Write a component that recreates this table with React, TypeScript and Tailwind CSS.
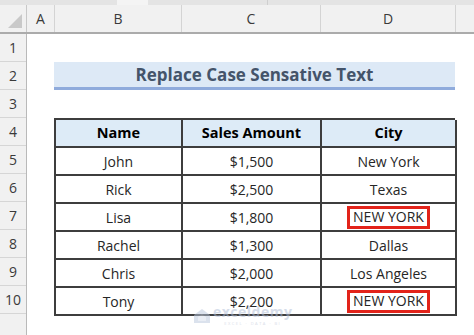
import React from "react";

const rows = [
  { name: "John", amount: "$1,500", city: "New York", boxed: false },
  { name: "Rick", amount: "$2,500", city: "Texas", boxed: false },
  { name: "Lisa", amount: "$1,800", city: "NEW YORK", boxed: true },
  { name: "Rachel", amount: "$1,300", city: "Dallas", boxed: false },
  { name: "Chris", amount: "$2,000", city: "Los Angeles", boxed: false },
  { name: "Tony", amount: "$2,200", city: "NEW YORK", boxed: true },
];

function Watermark() {
  return (
    <div className="absolute left-[193px] top-[306px] flex items-center gap-[2px] opacity-50 pointer-events-none">
      <svg width="18" height="16" viewBox="0 0 18 16">
        <path d="M1 7 L9 1 L17 7 L17 15 L1 15 Z" fill="#b9c6dc" />
        <path d="M5 9 L9 6 L13 9 L13 13 L5 13 Z" fill="#d6deec" />
      </svg>
      <div className="flex flex-col items-center">
        <span className="text-[14px] leading-[12px] font-bold text-[#aebcd6] font-['Open_Sans',sans-serif] tracking-[0.5px]">exceldemy</span>
        <span className="text-[4px] leading-[5px] text-[#b5c0d3] tracking-[1.5px] font-['Open_Sans',sans-serif] mt-[3px]">EXCEL · DATA · BI</span>
      </div>
    </div>
  );
}

export default function App() {
  const rowNums = ["1", "2", "3", "4", "5", "6", "7", "8", "9", "10", ""];
  return (
    <div className="relative w-[474px] h-[335px] overflow-hidden bg-white font-['Open_Sans',sans-serif] text-[#262626]">
      {/* top strip */}
      <div className="flex h-[5px] bg-[#e4e4e4]">
        <div className="w-[117px]" />
        <div className="w-[31px] bg-[#f4f4f4]" />
        <div className="w-[120px] border-r border-[#cfcfcf]" />
        <div className="flex-1" />
      </div>
      {/* column header */}
      <div className="flex h-[29px] bg-[#f1f1f1] border-b-2 border-[#ababab] text-[14px] text-[#3a3a3a]">
        <div className="relative w-[27px] border-r border-[#c8c8c8]">
          <div className="absolute right-[4px] bottom-[4px] w-0 h-0 border-l-[14px] border-l-transparent border-b-[14px] border-b-[#c9c9c9]" />
        </div>
        <div className="w-[28px] border-r border-[#d4d4d4] flex items-center justify-center">A</div>
        <div className="w-[127px] border-r border-[#d4d4d4] flex items-center justify-center">B</div>
        <div className="w-[139px] border-r border-[#d4d4d4] flex items-center justify-center">C</div>
        <div className="w-[135px] border-r border-[#d4d4d4] flex items-center justify-center">D</div>
        <div className="flex-1" />
      </div>
      <div className="flex">
        {/* row headers */}
        <div className="w-[27px] flex flex-col bg-[#f1f1f1] border-r border-[#b9b9b9] text-[14px] text-[#3a3a3a]">
          {rowNums.map((n, i) => (
            <div key={i} className="h-[28px] shrink-0 border-b border-[#d6d6d6] flex items-center justify-center">
              {n}
            </div>
          ))}
        </div>
        {/* sheet area */}
        <div className="flex flex-col pl-[27px]">
          <div className="h-[28px]" />
          <div className="w-[401px] h-[28px] bg-[#dde9f6] border-b-[3px] border-[#8fabdc] flex items-center justify-center text-[17px] font-bold text-[#44546a]">
            Replace Case Sensative Text
          </div>
          <div className="h-[28px]" />
          <div className="grid grid-cols-[127px_139px_135px] w-[401px] border-t-2 border-l-2 border-[#3d3d3d]">
            {["Name", "Sales Amount", "City"].map((h) => (
              <div key={h} className="h-[28px] bg-[#ddebf7] border-r-2 border-b-2 border-[#3d3d3d] flex items-center justify-center text-[14.5px] font-bold text-black">
                {h}
              </div>
            ))}
            {rows.map((r) => (
              <React.Fragment key={r.name}>
                <div className="h-[28px] border-r-2 border-b-2 border-[#3d3d3d] flex items-center justify-center text-[14px]">{r.name}</div>
                <div className="h-[28px] border-r-2 border-b-2 border-[#3d3d3d] flex items-center justify-center text-[14px]">{r.amount}</div>
                <div className="h-[28px] border-r-2 border-b-2 border-[#3d3d3d] flex items-center justify-center text-[14px]">
                  {r.boxed ? (
                    <span className="border-[3px] border-[#e2231a] px-[3px] h-[23px] flex items-center leading-none">{r.city}</span>
                  ) : (
                    r.city
                  )}
                </div>
              </React.Fragment>
            ))}
          </div>
        </div>
      </div>
      <Watermark />
    </div>
  );
}
